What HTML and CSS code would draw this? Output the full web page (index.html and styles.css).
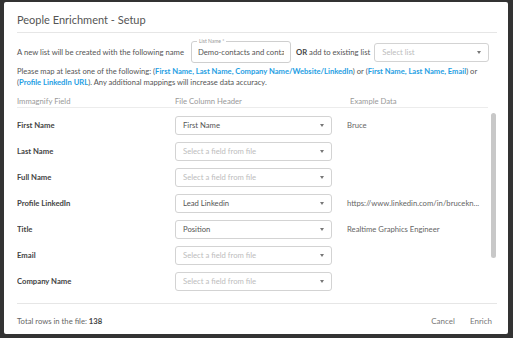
FILE: index.html
```html
<!DOCTYPE html>
<html>
<head>
<meta charset="utf-8">
<link rel="stylesheet" href="styles.css">
</head>
<body>
<div class="modal">
  <div class="header">People Enrichment - Setup</div>
  <div class="listrow">
    <span class="lead">A new list will be created with the following name</span>
    <div class="listname"><span class="flabel">List Name *</span><span class="val">Demo-contacts and contacts</span></div>
    <span class="or"><b>OR</b> add to existing list</span>
    <div class="select existing"><span class="ph">Select list</span><span class="caret"></span></div>
  </div>
  <p class="info">Please map at least one of the following: (<b class="hl">First Name, Last Name, Company Name/Website/LinkedIn</b>) or (<b class="hl">First Name, Last Name, Email</b>) or<br>(<b class="hl">Profile LinkedIn URL</b>). Any additional mappings will increase data accuracy.</p>
  <div class="thead"><span class="c1">Immagnify Field</span><span class="c2">File Column Header</span><span class="c3">Example Data</span></div>
  <div class="tbody">
    <div class="rows">
      <div class="row"><span class="label">First Name</span><div class="select"><span class="val">First Name</span><span class="caret"></span></div><span class="example">Bruce</span></div>
      <div class="row"><span class="label">Last Name</span><div class="select"><span class="ph">Select a field from file</span><span class="caret"></span></div><span class="example"></span></div>
      <div class="row"><span class="label">Full Name</span><div class="select"><span class="ph">Select a field from file</span><span class="caret"></span></div><span class="example"></span></div>
      <div class="row"><span class="label">Profile LinkedIn</span><div class="select"><span class="val">Lead Linkedin</span><span class="caret"></span></div><span class="example">https://www.linkedin.com/in/brucekn...</span></div>
      <div class="row"><span class="label">Title</span><div class="select"><span class="val">Position</span><span class="caret"></span></div><span class="example">Realtime Graphics Engineer</span></div>
      <div class="row"><span class="label">Email</span><div class="select"><span class="ph">Select a field from file</span><span class="caret"></span></div><span class="example"></span></div>
      <div class="row"><span class="label">Company Name</span><div class="select"><span class="ph">Select a field from file</span><span class="caret"></span></div><span class="example"></span></div>
    </div>
    <div class="scroll"><div class="thumb"></div></div>
  </div>
  <div class="footer">
    <span class="total">Total rows in the file: <b>138</b></span>
    <div class="actions"><span class="btn">Cancel</span><span class="btn">Enrich</span></div>
  </div>
</div>
</body>
</html>
```
FILE: styles.css
```css
html, body {
  margin: 0;
  padding: 0;
  background: #333333;
  height: 100%;
}
body {
  font-family: Lato, "Liberation Sans", sans-serif;
  overflow: hidden;
}
.modal {
  margin: 2px 0 0 4px;
  width: 504px;
  height: 332px;
  background: #fff;
  border-radius: 2px;
  box-sizing: border-box;
  padding: 0 11px 0 13px;
  display: flex;
  flex-direction: column;
  color: #555;
  font-size: 7.7px;
}
.header {
  height: 31px;
  box-sizing: border-box;
  padding-top: 4px;
  border-bottom: 1px solid #e6e6e6;
  display: flex;
  align-items: center;
  font-size: 11px;
  color: #555;
}
.listrow {
  margin-top: 8px;
  height: 22px;
  display: flex;
  align-items: center;
}
.lead { margin-right: 7px; white-space: nowrap; }
.listname {
  position: relative;
  width: 100px;
  height: 22px;
  box-sizing: border-box;
  border: 1px solid #cfcfcf;
  border-radius: 3px;
  padding: 0 6px;
  display: flex;
  align-items: center;
  flex-shrink: 0;
}
.listname .val {
  display: block;
  width: 86px;
  white-space: nowrap;
  overflow: hidden;
  color: #555;
  font-size: 7.7px;
}
.flabel {
  position: absolute;
  top: -4px;
  left: 5px;
  padding: 0 2px;
  background: #fff;
  font-size: 5px;
  line-height: 6px;
  color: #999;
}
.or { margin-left: 5px; margin-right: 4px; white-space: nowrap; }
.or b { color: #444; }
.select {
  width: 157px;
  height: 19px;
  box-sizing: border-box;
  border: 1px solid #d3d3d3;
  border-radius: 3px;
  padding: 0 7px;
  display: flex;
  align-items: center;
  justify-content: space-between;
  flex-shrink: 0;
}
.select.existing { width: 115px; }
.ph { color: #bdbdbd; }
.select .val { color: #555; }
.caret {
  width: 0;
  height: 0;
  border-left: 2.5px solid transparent;
  border-right: 2.5px solid transparent;
  border-top: 3px solid #777;
}
.info {
  margin: 3px 0 0 0;
  line-height: 11px;
  color: #555;
  font-size: 7.6px;
  white-space: nowrap;
}
.hl { color: #1e9ee3; }
.thead {
  margin-top: 7px;
  margin-right: 9px;
  height: 12px;
  border-bottom: 1px solid #ececec;
  display: flex;
  align-items: center;
  color: #999;
}
.c1 { width: 158px; }
.c2 { width: 175px; }
.tbody {
  height: 195px;
  display: flex;
  overflow: hidden;
}
.rows {
  flex: 1;
  padding-top: 4px;
}
.row {
  height: 26px;
  display: flex;
  align-items: center;
}
.label {
  width: 158px;
  font-weight: bold;
  color: #444;
}
.example {
  margin-left: 15px;
  color: #666;
  white-space: nowrap;
}
.scroll {
  width: 5px;
  margin-right: 1px;
}
.thumb {
  margin-top: 5px;
  height: 145px;
  background: #c8c8c8;
  border-radius: 3px;
}
.footer {
  flex: 1;
  border-top: 1px solid #e6e6e6;
  padding-top: 3px;
  display: flex;
  align-items: center;
  justify-content: space-between;
}
.total { color: #666; }
.total b { color: #444; }
.actions {
  display: flex;
  gap: 15px;
  padding-right: 5px;
}
.btn { color: #777; font-size: 8px; }
```
